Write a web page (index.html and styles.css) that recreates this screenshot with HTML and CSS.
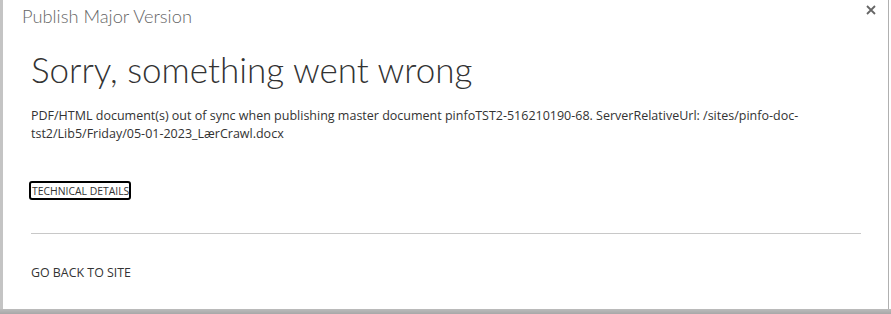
FILE: index.html
```html
<!DOCTYPE html>
<html>
<head>
<meta charset="utf-8">
<link rel="stylesheet" href="styles.css">
</head>
<body>
<div class="frame">
  <div class="dialog">
    <div class="titlebar">
      <span class="title">Publish Major Version</span>
      <span class="close" aria-label="Close">
        <svg width="10" height="10" viewBox="0 0 10 10"><path d="M1 1L9 9M9 1L1 9" stroke="#666" stroke-width="1.8" fill="none"/></svg>
      </span>
    </div>
    <div class="content">
      <h1 class="heading">Sorry, something went wrong</h1>
      <p class="message">PDF/HTML document(s) out of sync when publishing master document pinfoTST2-516210190-68. ServerRelativeUrl: /sites/pinfo-doc-tst2/Lib5/Friday/05-01-2023_LærCrawl.docx</p>
      <div class="details"><span class="details-link">TECHNICAL DETAILS</span></div>
      <div class="divider"></div>
      <div class="back">GO BACK TO SITE</div>
    </div>
  </div>
</div>
</body>
</html>
```

FILE: styles.css
```css
html, body {
  margin: 0;
  padding: 0;
  background: #b4b4b4;
}
body {
  width: 891px;
  height: 314px;
  overflow: hidden;
  font-family: "Open Sans", "Noto Sans", sans-serif;
}
.frame {
  display: flex;
  height: 314px;
  background: linear-gradient(to bottom, #ffffff 0, #ffffff 309px, #bcbcbc 309px, #a8a8a8 314px);
}
.dialog {
  margin-left: 3px;
  width: 885px;
  height: 309px;
  background: #fff;
  border-right: 1px solid #b0b0b0;
  box-shadow: -3px 0 0 #c4c4c4;
  position: relative;
}
.titlebar {
  display: flex;
  justify-content: space-between;
  align-items: flex-start;
  padding: 5px 12px 0 19px;
  height: 29px;
}
.title {
  font-family: "Lato", "Open Sans", sans-serif;
  font-size: 18.3px;
  font-weight: 300;
  color: #666;
  line-height: 22px;
}
.close {
  display: flex;
  margin-top: 0;
}
.content {
  padding: 9px 27px 0 28px;
}
.heading {
  margin: 0;
  font-family: "Lato", "Open Sans", sans-serif;
  font-size: 35px;
  font-weight: 300;
  color: #333;
  line-height: 52px;
}
.message {
  margin: 12px 0 0 0;
  font-size: 12.5px;
  line-height: 18px;
  color: #333;
  max-width: 800px;
}
.details {
  margin-top: 38px;
  display: flex;
}
.details-link {
  margin-left: -2px;
  padding: 1px 0 0 1px;
  font-size: 10.4px;
  line-height: 14px;
  color: #333;
  border: 2px solid #000;
  border-radius: 3px;
}
.divider {
  margin-top: 33px;
  height: 1px;
  background: #c8c8c8;
}
.back {
  margin-top: 31px;
  font-size: 12.4px;
  color: #333;
  line-height: 16px;
}
```
